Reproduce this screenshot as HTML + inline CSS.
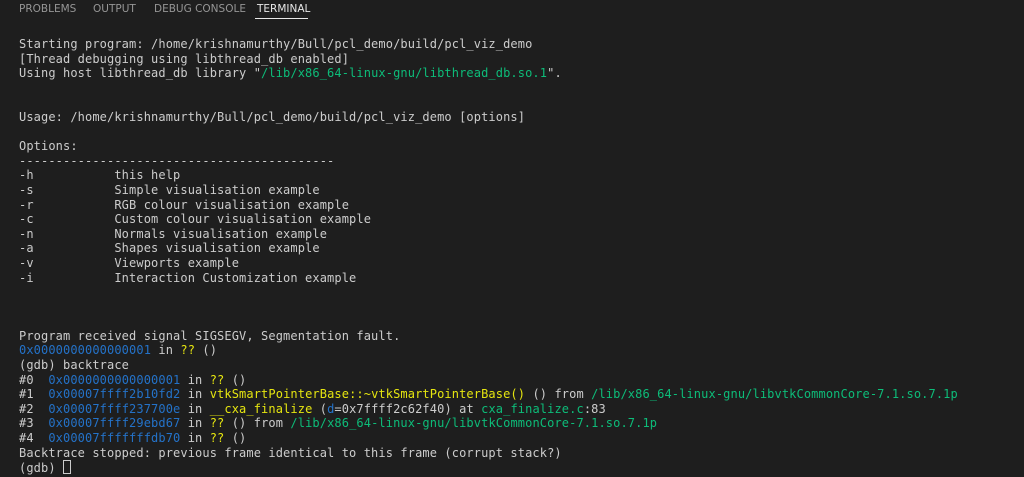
<!DOCTYPE html>
<html><head><meta charset="utf-8"><style>
html,body{margin:0;padding:0;background:#1e1e1e;width:1024px;height:477px;overflow:hidden}
.tabs{position:absolute;top:0;left:0;height:22px;font-family:"DejaVu Sans","Liberation Sans",sans-serif;font-size:10.5px;color:#969696}
.tab{position:absolute;top:3px;white-space:nowrap}
.act{color:#e7e7e7}
.ul{position:absolute;left:255px;top:18px;width:53px;height:1px;background:#e7e7e7}
pre{position:absolute;left:19px;top:37px;margin:0;font-family:"DejaVu Sans Mono","Liberation Mono",monospace;font-size:12px;letter-spacing:0.11px;line-height:14.6px;color:#cccccc}
.b{color:#2472c8}.y{color:#e5e510}.g{color:#0dbc79}
.cur{display:inline-block;width:6px;height:12px;border:1px solid #cccccc;vertical-align:-2px}
</style></head><body>
<div class="tabs">
<span class="tab" style="left:19px">PROBLEMS</span>
<span class="tab" style="left:93px">OUTPUT</span>
<span class="tab" style="left:154px">DEBUG CONSOLE</span>
<span class="tab act" style="left:257px">TERMINAL</span>
</div>
<div class="ul"></div>
<pre>Starting program: /home/krishnamurthy/Bull/pcl_demo/build/pcl_viz_demo
[Thread debugging using libthread_db enabled]
Using host libthread_db library "<span class="g">/lib/x86_64-linux-gnu/libthread_db.so.1</span>".


Usage: /home/krishnamurthy/Bull/pcl_demo/build/pcl_viz_demo [options]

Options:
-------------------------------------------
-h           this help
-s           Simple visualisation example
-r           RGB colour visualisation example
-c           Custom colour visualisation example
-n           Normals visualisation example
-a           Shapes visualisation example
-v           Viewports example
-i           Interaction Customization example



Program received signal SIGSEGV, Segmentation fault.
<span class="b">0x0000000000000001</span> in <span class="y">??</span> ()
(gdb) backtrace
#0  <span class="b">0x0000000000000001</span> in <span class="y">??</span> ()
#1  <span class="b">0x00007ffff2b10fd2</span> in <span class="y">vtkSmartPointerBase::~vtkSmartPointerBase()</span> () from <span class="g">/lib/x86_64-linux-gnu/libvtkCommonCore-7.1.so.7.1p</span>
#2  <span class="b">0x00007ffff237700e</span> in <span class="y">__cxa_finalize</span> (<span class="b">d</span>=0x7ffff2c62f40) at <span class="g">cxa_finalize.c</span>:83
#3  <span class="b">0x00007ffff29ebd67</span> in <span class="y">??</span> () from <span class="g">/lib/x86_64-linux-gnu/libvtkCommonCore-7.1.so.7.1p</span>
#4  <span class="b">0x00007fffffffdb70</span> in <span class="y">??</span> ()
Backtrace stopped: previous frame identical to this frame (corrupt stack?)
(gdb) <span class="cur"></span></pre>
</body></html>
